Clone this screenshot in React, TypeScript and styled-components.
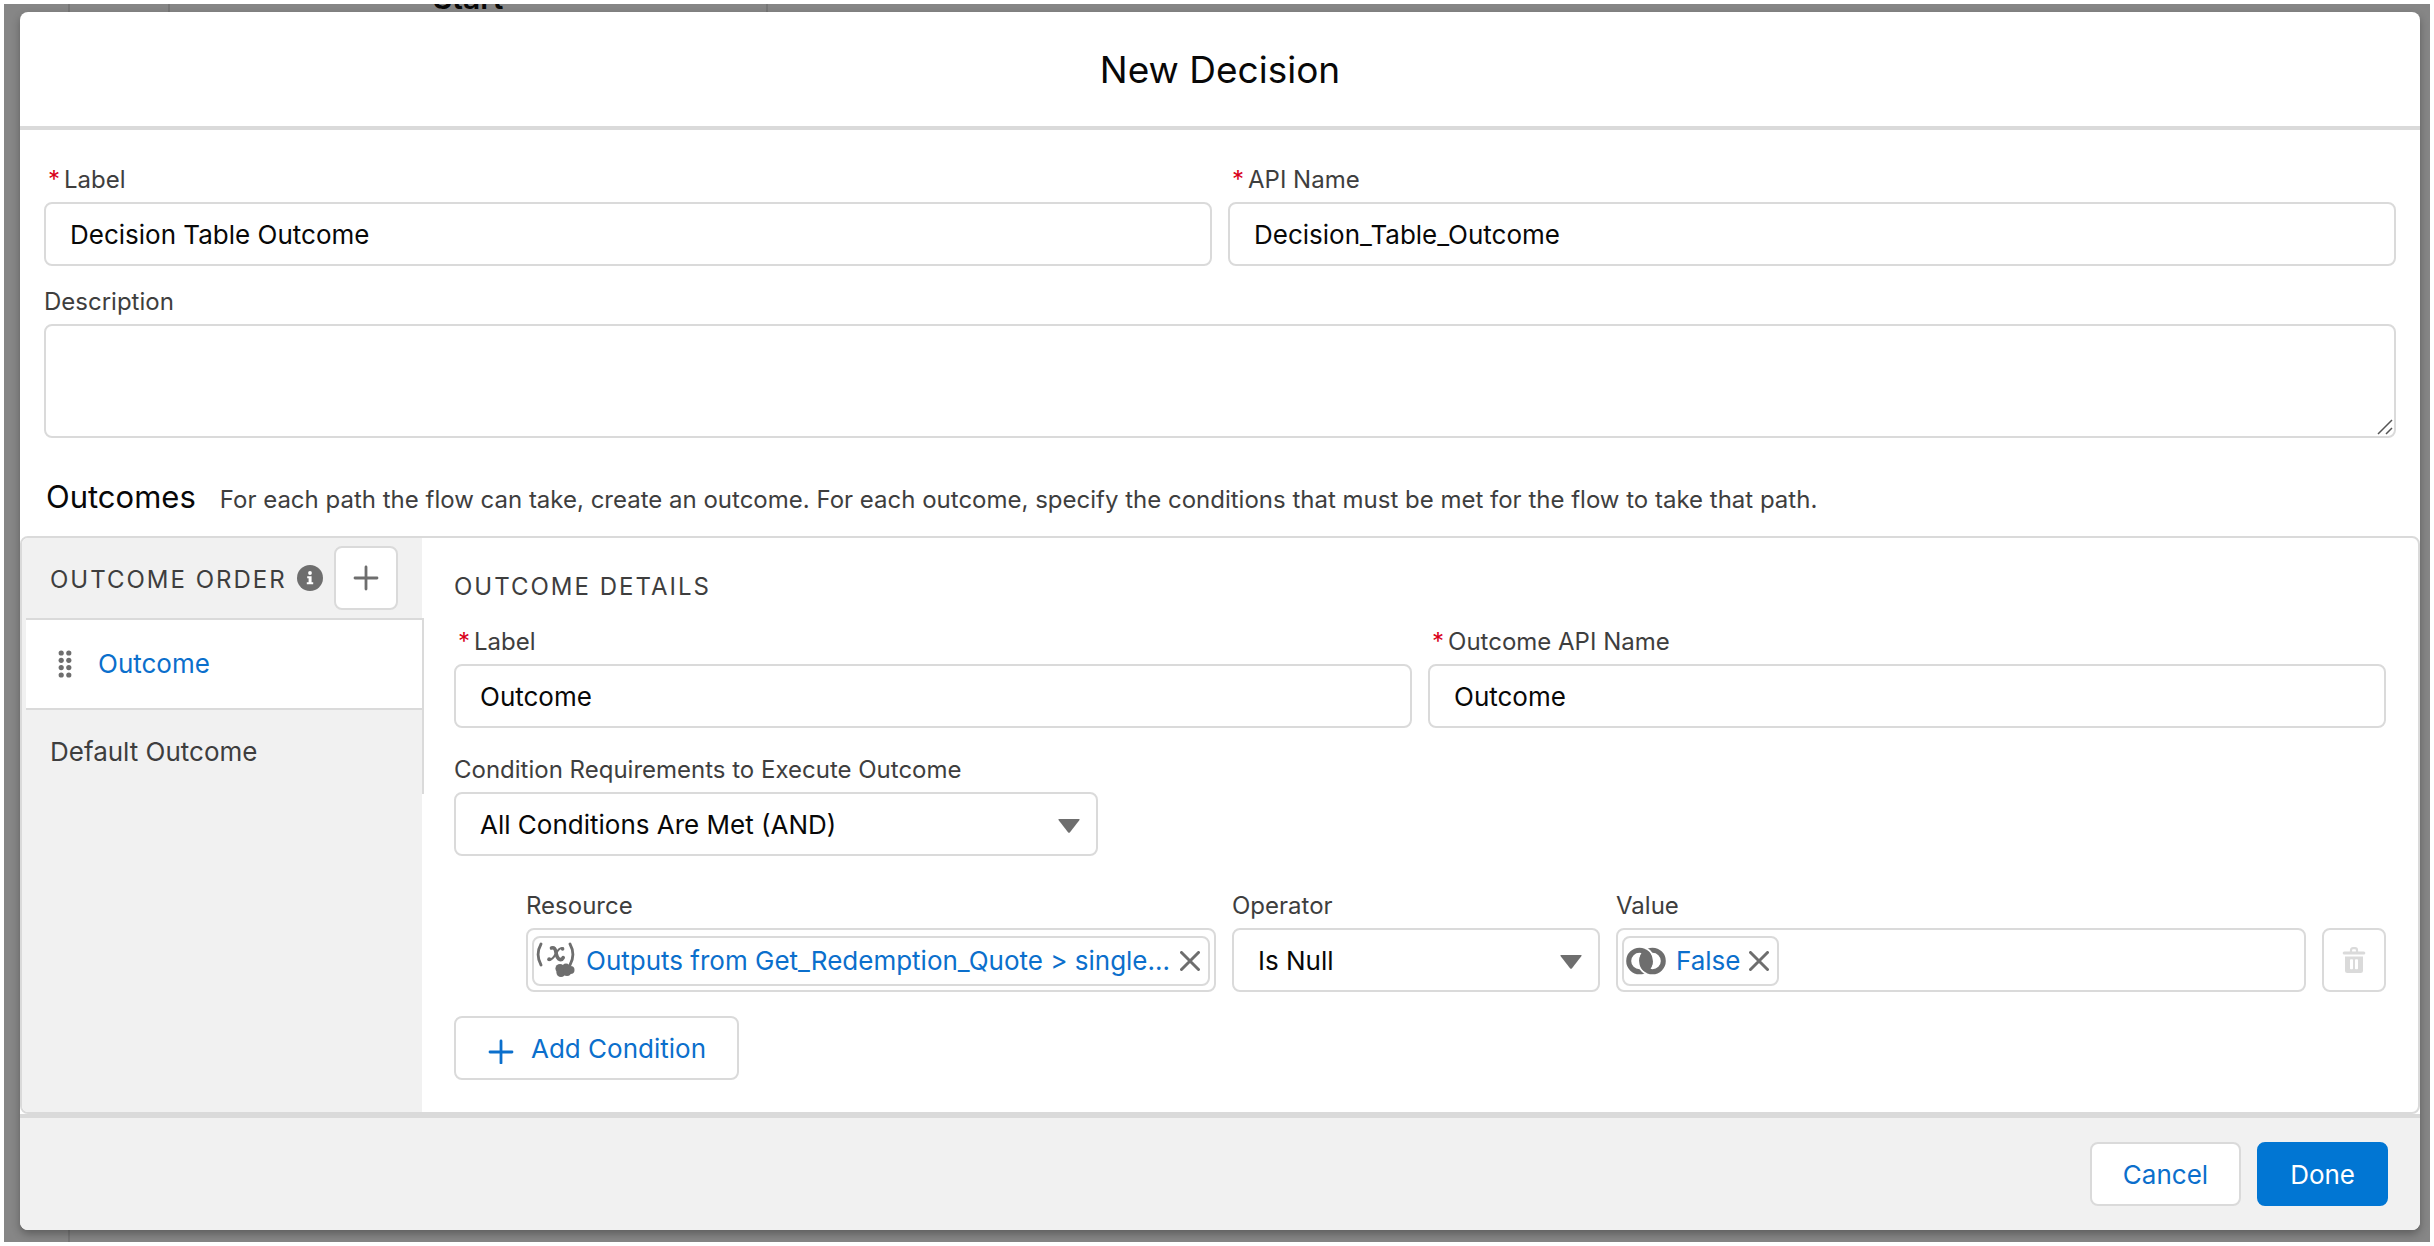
import React, { useState } from "react";
import styled, { createGlobalStyle } from "styled-components";

const color = {
  border: "#dadada",
  panel: "#f1f1f1",
  text: "#080808",
  label: "#3e3e3e",
  icon: "#6e6e6e",
  link: "#0b6fcc",
  brand: "#0176d3",
  required: "#d9001b",
  scrim: "#868686",
};

const GlobalStyle = createGlobalStyle`
  *, *::before, *::after { box-sizing: border-box; }
  body {
    margin: 0;
    background: #ffffff;
    color: ${color.text};
    font-family: Inter, "Liberation Sans", sans-serif;
    font-size: 26px;
  }
  button, input, select, textarea { font: inherit; color: inherit; }
  h1, h2, h3, p, ul { margin: 0; padding: 0; font-weight: 400; }
`;

const Page = styled.div`
  display: flex;
  min-height: 100vh;
  padding: 4px;
`;

const Scrim = styled.div`
  position: relative;
  display: flex;
  flex: 1;
  min-width: 0;
  padding: 8px 10px 12px 16px;
  overflow: hidden;
  background: ${color.scrim};
`;

/* The flow canvas that shows dimmed behind the dialog. */
const Canvas = styled.div`
  position: absolute;
  inset: 0;
`;

const CanvasRule = styled.div<{ $left: number }>`
  position: absolute;
  top: 0;
  bottom: 0;
  left: ${(p) => p.$left}px;
  width: 2px;
  background: #777777;
`;

const StartNode = styled.div`
  position: absolute;
  top: -26px;
  left: 164px;
  width: 600px;
  height: 36px;
  border: solid #777777;
  border-width: 0 2px;
  font-size: 30px;
  font-weight: 600;
  line-height: 40px;
  text-align: center;
`;

const Modal = styled.section`
  position: relative;
  display: flex;
  flex: 1;
  flex-direction: column;
  min-width: 0;
  border-radius: 8px;
  background: #ffffff;
  box-shadow: 0 4px 8px rgba(0, 0, 0, 0.3);
`;

const ModalHeader = styled.header`
  padding: 32px 32px 30px;
  border-bottom: 4px solid ${color.border};
  text-align: center;
`;

const ModalTitle = styled.h1`
  font-size: 37px;
  line-height: 52px;
`;

const ModalFooter = styled.footer`
  display: flex;
  justify-content: flex-end;
  gap: 16px;
  padding: 24px 32px;
  border-top: 4px solid ${color.border};
  border-radius: 0 0 8px 8px;
  background: ${color.panel};
`;

const ElementFields = styled.div`
  display: grid;
  grid-template-columns: 1fr 1fr;
  gap: 18px 16px;
  padding: 32px 24px 0;
`;

const Field = styled.div<{ $wide?: boolean }>`
  display: flex;
  flex-direction: column;
  gap: 4px;
  min-width: 0;
  grid-column: ${(p) => (p.$wide ? "1 / -1" : "auto")};
`;

const FieldLabel = styled.label`
  color: ${color.label};
  font-size: 24px;
  line-height: 36px;
`;

const Required = styled.abbr`
  padding: 0 4px;
  color: ${color.required};
  text-decoration: none;
`;

const TextInput = styled.input`
  width: 100%;
  height: 64px;
  padding: 0 24px;
  border: 2px solid ${color.border};
  border-radius: 8px;
  background: #ffffff;
`;

const TextAreaWrap = styled.div`
  position: relative;
  display: flex;
`;

const TextArea = styled.textarea`
  width: 100%;
  height: 114px;
  padding: 12px 24px;
  border: 2px solid ${color.border};
  border-radius: 8px;
  resize: none;
`;

const ResizeGrip = styled.svg`
  position: absolute;
  right: 3px;
  bottom: 3px;
`;

const SelectWrap = styled.div`
  position: relative;
  display: flex;
`;

const Select = styled.select`
  width: 100%;
  height: 64px;
  padding: 0 64px 0 24px;
  border: 2px solid ${color.border};
  border-radius: 8px;
  background: #ffffff;
  appearance: none;
`;

const SelectArrow = styled.svg`
  position: absolute;
  top: 27px;
  right: 18px;
  pointer-events: none;
`;

const OutcomesHeading = styled.div`
  display: flex;
  align-items: baseline;
  gap: 24px;
  padding: 40px 26px 20px;
`;

const OutcomesTitle = styled.h2`
  font-size: 31px;
  line-height: 38px;
`;

const OutcomesHint = styled.p`
  color: ${color.label};
  font-size: 24px;
  line-height: 30px;
`;

const OutcomesPanel = styled.div`
  display: flex;
  flex: 1;
  border: 2px solid ${color.border};
  border-radius: 8px;
  overflow: hidden;
`;

const Sidebar = styled.aside`
  flex: 0 0 400px;
  background: ${color.panel};
`;

const SidebarHeader = styled.div`
  display: flex;
  align-items: center;
  gap: 10px;
  padding: 8px 24px 8px 28px;
`;

const SectionTitle = styled.h3`
  margin-bottom: -2px;
  padding-top: 2px;
  color: ${color.label};
  font-size: 24px;
  line-height: 30px;
  letter-spacing: 2px;
  text-transform: uppercase;
  white-space: nowrap;
`;

const InfoButton = styled.button`
  display: flex;
  padding: 0;
  border: 0;
  background: none;
`;

const IconButton = styled.button<{ $pushed?: boolean }>`
  display: flex;
  flex: none;
  align-items: center;
  justify-content: center;
  width: 64px;
  height: 64px;
  margin-left: ${(p) => (p.$pushed ? "auto" : "0")};
  padding: 0;
  border: 2px solid ${color.border};
  border-radius: 8px;
  background: #ffffff;
`;

const OutcomeList = styled.ul`
  position: relative;
  margin: 0 -2px 0 4px;
  border-right: 2px solid ${color.border};
  list-style: none;
`;

const OutcomeItem = styled.li<{ $active?: boolean }>`
  display: flex;
  align-items: center;
  gap: 26px;
  height: ${(p) => (p.$active ? "92px" : "84px")};
  padding: 0 ${(p) => (p.$active ? "32px" : "24px")};
  border: solid ${color.border};
  border-width: ${(p) => (p.$active ? "2px 0" : "0")};
  background: ${(p) => (p.$active ? "#ffffff" : "transparent")};
`;

const OutcomeLink = styled.a<{ $active?: boolean }>`
  color: ${(p) => (p.$active ? color.link : color.label)};
  line-height: 36px;
  text-decoration: none;
`;

const Details = styled.div`
  display: flex;
  flex: 1;
  flex-direction: column;
  gap: 24px;
  min-width: 0;
  padding: 32px;
`;

const DetailFields = styled.div`
  display: grid;
  grid-template-columns: 1fr 1fr;
  gap: 16px;
`;

const LogicField = styled(Field)`
  width: calc(100% / 3);
`;

const ConditionRow = styled.div`
  display: grid;
  grid-template-columns: minmax(0, 15fr) minmax(0, 8fr) minmax(0, 15fr) 64px;
  align-items: end;
  gap: 16px;
  padding: 8px 0 0 72px;
`;

const Combobox = styled.div`
  display: flex;
  height: 64px;
  padding: 6px 4px 4px;
  border: 2px solid ${color.border};
  border-radius: 8px;
  background: #ffffff;
`;

const ComboboxInput = styled.input`
  flex: 1;
  min-width: 0;
  border: 0;
  outline: 0;
  background: none;
`;

const Pill = styled.span<{ $fill?: boolean }>`
  display: flex;
  flex: ${(p) => (p.$fill ? "1" : "none")};
  align-items: center;
  min-width: 0;
  padding: 0 8px 0 2px;
  border: 2px solid ${color.border};
  border-radius: 8px;
`;

const PillLabel = styled.a`
  flex: 1;
  min-width: 0;
  margin: 0 8px 0 10px;
  overflow: hidden;
  color: ${color.link};
  line-height: 36px;
  text-decoration: none;
  text-overflow: ellipsis;
  white-space: nowrap;
`;

const PillRemove = styled.button`
  display: flex;
  padding: 0;
  border: 0;
  background: none;
`;

const Button = styled.button<{ $brand?: boolean }>`
  display: flex;
  align-items: center;
  align-self: flex-start;
  gap: 16px;
  height: 64px;
  padding: 0 31px;
  border: 2px solid ${(p) => (p.$brand ? color.brand : color.border)};
  border-radius: 8px;
  background: ${(p) => (p.$brand ? color.brand : "#ffffff")};
  color: ${(p) => (p.$brand ? "#ffffff" : color.link)};
`;

/* "low" seats the plus near the text baseline, for use beside a word. */
const PlusIcon = ({ stroke, low }: { stroke: string; low?: boolean }) => (
  <svg width="28" height="32" viewBox={low ? "0 -4 28 32" : "0 0 28 32"} aria-hidden="true">
    <path d="M14 5v22M3 16h22" stroke={stroke} strokeWidth="2.8" strokeLinecap="round" />
  </svg>
);

const CloseIcon = () => (
  <svg width="20" height="20" viewBox="0 0 20 20" aria-hidden="true">
    <path d="M1.5 1.5l17 17M18.5 1.5l-17 17" stroke={color.icon} strokeWidth="3" strokeLinecap="round" />
  </svg>
);

const InfoIcon = () => (
  <svg width="26" height="26" viewBox="0 0 26 26" aria-hidden="true">
    <circle cx="13" cy="13" r="13" fill={color.icon} />
    <circle cx="13" cy="8" r="1.9" fill="#fff" />
    <path d="M10.2 11.2h4.4v6h1.6v2h-6.4v-2h1.8v-4h-1.4z" fill="#fff" />
  </svg>
);

const GripIcon = () => (
  <svg width="14" height="28" viewBox="0 0 14 28" fill={color.icon} aria-hidden="true">
    {[3, 10.3, 17.6, 25].map((y) => (
      <React.Fragment key={y}>
        <circle cx="3.2" cy={y} r="2.6" />
        <circle cx="10.8" cy={y} r="2.6" />
      </React.Fragment>
    ))}
  </svg>
);

const TrashIcon = () => (
  <svg width="24" height="28" viewBox="0 0 24 28" aria-hidden="true">
    <path d="M2.2 7h19.6" stroke={color.border} strokeWidth="3" strokeLinecap="round" />
    <path d="M9 6V4.2Q9 2.2 11 2.2h2Q15 2.2 15 4.2V6" fill="none" stroke={color.border} strokeWidth="2.2" />
    <path
      fillRule="evenodd"
      fill={color.border}
      d="M3 10.5h18v14q0 2.5-2.5 2.5h-13q-2.5 0-2.5-2.5zM8 14v8.5q0 .8.8.8h1.4q.8 0 .8-.8V14q0-.8-.8-.8H8.8q-.8 0-.8.8zM13 14v8.5q0 .8.8.8h1.4q.8 0 .8-.8V14q0-.8-.8-.8h-1.4q-.8 0-.8.8z"
    />
  </svg>
);

const VariableIcon = () => (
  <svg width="40" height="40" viewBox="0 0 40 40" fill="none" stroke={color.icon} aria-hidden="true">
    <path d="M5 3Q-.8 13.5 5 24M34 3Q39.8 13.5 34 24" strokeWidth="2.8" strokeLinecap="round" />
    <path d="M15.5 7Q19.2 5.6 20 11.5T24 18.6Q26 19 27.2 16.6" strokeWidth="3.6" strokeLinecap="round" />
    <path d="M27 7.2Q23.5 6 20 12.5T12.8 19" strokeWidth="2.2" strokeLinecap="round" />
    <circle cx="26.6" cy="8" r="1.8" fill={color.icon} stroke="none" />
    <circle cx="13.2" cy="18.3" r="2" fill={color.icon} stroke="none" />
    <g fill={color.icon} stroke="none">
      <circle cx="24" cy="27.5" r="4.6" />
      <circle cx="30" cy="27" r="4.4" />
      <circle cx="34.5" cy="29" r="4" />
      <circle cx="25" cy="31.5" r="4.6" />
      <circle cx="31" cy="31" r="4" />
    </g>
  </svg>
);

const BooleanIcon = () => (
  <svg width="40" height="28" viewBox="0 0 40 28" fill="none" aria-hidden="true">
    <circle cx="13.5" cy="14" r="10.8" stroke={color.icon} strokeWidth="5" />
    <circle cx="26.5" cy="14" r="10.8" stroke={color.icon} strokeWidth="5" />
    <path d="M12.5 14A14 14 0 0 0 20 26.6" stroke="#fff" strokeWidth="2" />
    <path d="M27.5 14A14 14 0 0 0 20 1.4" stroke="#fff" strokeWidth="2" />
    <path d="M20 2.4A13.3 13.3 0 0 1 20 25.6A13.3 13.3 0 0 1 20 2.4Z" fill={color.icon} />
  </svg>
);

const Arrow = () => (
  <SelectArrow width="22" height="14" viewBox="0 0 22 14" aria-hidden="true">
    <path d="M1 0h20q1 0 .5 1L12 13.3q-1 1-2 0L.5 1Q0 0 1 0z" fill={color.icon} />
  </SelectArrow>
);

type TextFieldProps = { id: string; label: string; initial: string };

const TextField = ({ id, label, initial }: TextFieldProps) => {
  const [value, setValue] = useState(initial);
  return (
    <Field>
      <FieldLabel htmlFor={id}>
        <Required title="required">*</Required>
        {label}
      </FieldLabel>
      <TextInput id={id} value={value} onChange={(e) => setValue(e.target.value)} />
    </Field>
  );
};

export default function App() {
  return (
    <>
      <GlobalStyle />
      <Page>
        <Scrim>
          <Canvas aria-hidden="true">
            <CanvasRule $left={64} />
            <StartNode>Start</StartNode>
          </Canvas>
          <Modal role="dialog" aria-labelledby="dialog-title">
            <ModalHeader>
              <ModalTitle id="dialog-title">New Decision</ModalTitle>
            </ModalHeader>

            <ElementFields>
              <TextField id="label" label="Label" initial="Decision Table Outcome" />
              <TextField id="api-name" label="API Name" initial="Decision_Table_Outcome" />
              <Field $wide>
                <FieldLabel htmlFor="description">Description</FieldLabel>
                <TextAreaWrap>
                  <TextArea id="description" />
                  <ResizeGrip width="16" height="16" viewBox="0 0 16 16" aria-hidden="true">
                    <path d="M1 15L15 1M9 15l6-6" stroke="#555" strokeWidth="1.5" />
                  </ResizeGrip>
                </TextAreaWrap>
              </Field>
            </ElementFields>

            <OutcomesHeading>
              <OutcomesTitle>Outcomes</OutcomesTitle>
              <OutcomesHint>
                For each path the flow can take, create an outcome. For each outcome, specify the conditions that must
                be met for the flow to take that path.
              </OutcomesHint>
            </OutcomesHeading>

            <OutcomesPanel>
              <Sidebar>
                <SidebarHeader>
                  <SectionTitle>Outcome Order</SectionTitle>
                  <InfoButton type="button" aria-label="Help">
                    <InfoIcon />
                  </InfoButton>
                  <IconButton type="button" aria-label="New outcome" $pushed>
                    <PlusIcon stroke={color.icon} />
                  </IconButton>
                </SidebarHeader>
                <OutcomeList>
                  <OutcomeItem $active>
                    <GripIcon />
                    <OutcomeLink href="#outcome" $active>
                      Outcome
                    </OutcomeLink>
                  </OutcomeItem>
                  <OutcomeItem>
                    <OutcomeLink href="#default">Default Outcome</OutcomeLink>
                  </OutcomeItem>
                </OutcomeList>
              </Sidebar>

              <Details>
                <SectionTitle>Outcome Details</SectionTitle>
                <DetailFields>
                  <TextField id="outcome-label" label="Label" initial="Outcome" />
                  <TextField id="outcome-api-name" label="Outcome API Name" initial="Outcome" />
                </DetailFields>
                <LogicField>
                  <FieldLabel htmlFor="logic">Condition Requirements to Execute Outcome</FieldLabel>
                  <SelectWrap>
                    <Select id="logic">
                      <option>All Conditions Are Met (AND)</option>
                    </Select>
                    <Arrow />
                  </SelectWrap>
                </LogicField>

                <ConditionRow>
                  <Field>
                    <FieldLabel as="span">Resource</FieldLabel>
                    <Combobox>
                      <Pill $fill>
                        <VariableIcon />
                        <PillLabel href="#resource">Outputs from Get_Redemption_Quote &gt; single...</PillLabel>
                        <PillRemove type="button" aria-label="Clear resource">
                          <CloseIcon />
                        </PillRemove>
                      </Pill>
                    </Combobox>
                  </Field>
                  <Field>
                    <FieldLabel htmlFor="operator">Operator</FieldLabel>
                    <SelectWrap>
                      <Select id="operator">
                        <option>Is Null</option>
                      </Select>
                      <Arrow />
                    </SelectWrap>
                  </Field>
                  <Field>
                    <FieldLabel htmlFor="value">Value</FieldLabel>
                    <Combobox>
                      <Pill>
                        <BooleanIcon />
                        <PillLabel href="#value">False</PillLabel>
                        <PillRemove type="button" aria-label="Clear value">
                          <CloseIcon />
                        </PillRemove>
                      </Pill>
                      <ComboboxInput id="value" />
                    </Combobox>
                  </Field>
                  <IconButton type="button" aria-label="Delete condition" disabled>
                    <TrashIcon />
                  </IconButton>
                </ConditionRow>

                <Button type="button">
                  <PlusIcon stroke={color.link} low />
                  Add Condition
                </Button>
              </Details>
            </OutcomesPanel>

            <ModalFooter>
              <Button type="button">Cancel</Button>
              <Button type="button" $brand>
                Done
              </Button>
            </ModalFooter>
          </Modal>
        </Scrim>
      </Page>
    </>
  );
}
